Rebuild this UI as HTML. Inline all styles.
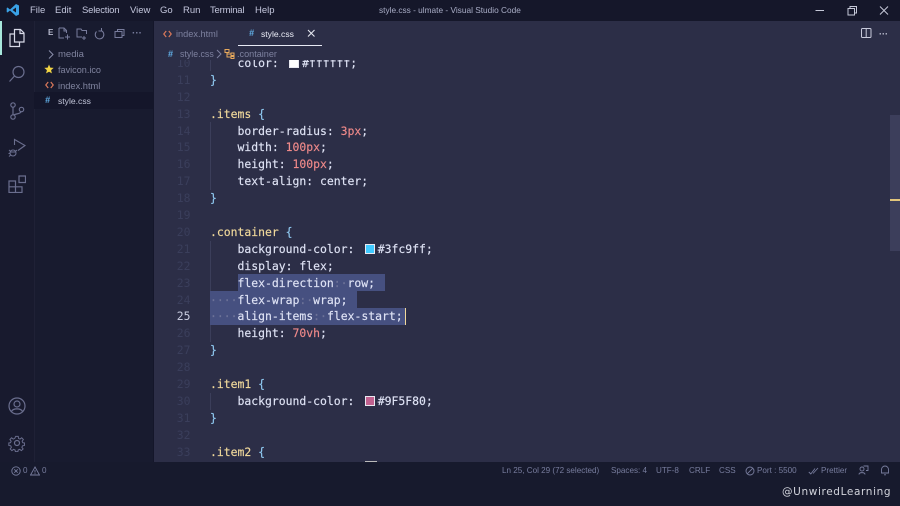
<!DOCTYPE html>
<html><head><meta charset="utf-8">
<style>
html,body{margin:0;padding:0;width:900px;height:506px;overflow:hidden;background:#171a2d}
*{box-sizing:border-box}
body{position:relative;font-family:"Liberation Sans",sans-serif;font-size:9.5px;color:#a9adc6}
.a{position:absolute;white-space:pre}
.m{top:4px;font-size:9.5px;color:#c3c6dc;line-height:14px}
#ed{position:absolute;left:153px;top:60px;width:737px;height:402px;overflow:hidden}
#in{position:absolute;left:0;top:2.4px;width:737px;height:400px}
.l{position:absolute;left:57px;font-family:"DejaVu Sans Mono","Liberation Mono",monospace;font-size:11.43px;line-height:17px;color:#dfe3f5;white-space:pre;-webkit-text-stroke:.15px}
.n{position:absolute;width:37.5px;text-align:right;font-family:"DejaVu Sans Mono",monospace;font-size:11.4px;line-height:17px;color:#3a3e5b;left:0}
.y{color:#f1d99b}.b{color:#8fc8f0}.r{color:#f08a8a}
.d{color:#6d7398}
.sw{display:inline-block;width:10px;height:10px;border:1px solid #e8e8f0;vertical-align:-1px;margin-right:3px;margin-left:3.5px}
.s{top:464px;font-size:8.1px;color:#787d9e;line-height:13px}
svg{position:absolute;fill:none}
</style></head><body>
<!-- panels -->
<div class="a" style="left:0;top:0;width:900px;height:21px;background:#15172a"></div>
<div class="a" style="left:0;top:21px;width:34px;height:441px;background:#181a2e"></div>
<div class="a" style="left:34px;top:21px;width:119px;height:441px;background:#181b2f;border-left:1px solid #1f2136"></div>
<div class="a" style="left:153px;top:21px;width:747px;height:441px;background:#2c2e47"></div>
<div class="a" style="left:153px;top:21px;width:1px;height:441px;background:#14162a"></div>
<div class="a" style="left:0;top:462px;width:900px;height:44px;background:#171a2d"></div>
<div class="a" style="left:0;top:21px;width:2px;height:34px;background:#a7e8dc"></div>
<div class="a" style="left:34px;top:92px;width:119px;height:17px;background:#14162a"></div>

<!-- title bar -->
<svg style="left:6px;top:3px" width="14" height="14" viewBox="0 0 14 14"><path d="M10 1 L13 2.500 V11.500 L10 13 L4 7.500 L1.500 9.500 L.7 9 V5 L1.500 4.500 L4 6.500 Z M10 4.500 L6.500 7 L10 9.500 Z" fill="#3aa2e6" fill-rule="evenodd"/></svg>
<span class="a m" style="left:30px">File</span>
<span class="a m" style="left:55px">Edit</span>
<span class="a m" style="left:82px;letter-spacing:-.2px">Selection</span>
<span class="a m" style="left:130px">View</span>
<span class="a m" style="left:160px">Go</span>
<span class="a m" style="left:183px">Run</span>
<span class="a m" style="left:210px;letter-spacing:-.2px">Terminal</span>
<span class="a m" style="left:255px">Help</span>
<span class="a" style="left:379px;top:3px;font-size:8.300px;line-height:14px;color:#a9adc6">style.css - ulmate - Visual Studio Code</span>
<svg style="left:810px;top:5px" width="80" height="12" viewBox="0 0 80 12" stroke="#c5c8d8" stroke-width="1"><path d="M5.500 5.500H14"/><path d="M38 3.500h6.500v6.500h-6.500z"/><path d="M40 3.500V1.500h6.500v6.500h-2"/><path d="M70 1.500l8 8M78 1.500l-8 8"/></svg>

<!-- activity bar icons -->
<svg style="left:8px;top:28px" width="18" height="20" viewBox="0 0 18 20" stroke="#d8dae8" stroke-width="1.200"><path d="M6.500 1.500h6l3.500 3.500v9h-9.500z"/><path d="M12 1.500v4h4"/><path d="M6.500 6H2v12.500h9.500V14"/></svg>
<svg style="left:8px;top:65px" width="18" height="18" viewBox="0 0 18 18" stroke="#6a6e8e" stroke-width="1.200"><circle cx="10.500" cy="7" r="5.500"/><path d="M6.500 11 1.500 16.500"/></svg>
<svg style="left:8px;top:102px" width="18" height="18" viewBox="0 0 18 18" stroke="#6a6e8e" stroke-width="1.200"><circle cx="5" cy="3" r="2.200"/><circle cx="5" cy="15" r="2.200"/><circle cx="13.500" cy="7.500" r="2.200"/><path d="M5 5.200v7.600M13 9.700C12.500 12 8 11.500 5.500 13"/></svg>
<svg style="left:7px;top:138px" width="20" height="20" viewBox="0 0 20 20" stroke="#6a6e8e" stroke-width="1.100"><path d="M7.500 7V1.500L18 7.500 11 12.500"/><circle cx="6" cy="15" r="3"/><path d="M2 12 3.800 13.500M1.500 15.500H3M2 18.500 3.800 17M10 12 8.200 13.500M3.500 14h5"/></svg>
<svg style="left:8px;top:175px" width="18" height="18" viewBox="0 0 18 18" stroke="#6a6e8e" stroke-width="1.200"><path d="M1 6h6.500v11.500H1zM1 11.800h13V17.500H7.500M7.500 11.800h6.500"/><path d="M11 1h6.500v6.500H11z"/></svg>
<svg style="left:8px;top:397px" width="18" height="18" viewBox="0 0 18 18" stroke="#6a6e8e" stroke-width="1.200"><circle cx="9" cy="9" r="8"/><circle cx="9" cy="7" r="3"/><path d="M3.500 14.500C5 11 13 11 14.500 14.500"/></svg>
<svg style="left:8px;top:434px" width="18" height="18" viewBox="0 0 18 18" stroke="#6a6e8e" stroke-width="1.200"><circle cx="9" cy="9" r="2.500"/><path d="M7.500 1h3l.4 2.500 1.800.8 2-1.500 2 2.100-1.500 2 .8 1.800 2 .3v3l-2.300.4-.8 1.800 1.500 2-2.100 2-2-1.500-1.800.8-.4 2h-3l-.4-2-1.800-.8-2 1.500-2.100-2 1.500-2-.8-1.800-2.300-.4v-3l2-.3.8-1.800-1.500-2 2-2.100 2 1.500 1.800-.8z" transform="translate(1.500 1.500) scale(.83)"/></svg>

<!-- explorer -->
<span class="a" style="left:48px;top:27px;font-size:8px;line-height:12px;color:#b8bbcf;font-weight:bold">E</span>
<svg style="left:58px;top:27px" width="92" height="13" viewBox="0 0 92 13" stroke="#787c9c" stroke-width="1"><path d="M1 1h5l2.500 2.500V6M1 1v10h5M6 1v3h3M7 10h5M9.500 7.500v5"/><path d="M19 3V2h4l1 1.500h4.500V7M19 3v7h5M26 9v4M24 11h4"/><path d="M43 3.500A4.300 4.300 0 1 1 38.500 4.500M43.500 1v3h-3"/><path d="M57 4.500h7v6h-7zM59.500 4.500V2.500h6.500v6h-2"/></svg>
<span class="a" style="left:132px;top:27px;font-size:10px;line-height:14px;color:#787c9c;font-weight:bold">···</span>
<svg style="left:47px;top:49px" width="8" height="11" viewBox="0 0 8 11" stroke="#8b8fac" stroke-width="1"><path d="M2 1.500 6 5.500 2 9.500"/></svg>
<span class="a" style="left:58px;top:48px;font-size:9.500px;line-height:14px;color:#80849f">media</span>
<svg style="left:44px;top:64px" width="10" height="10" viewBox="0 0 10 10"><path d="M5 .5 6.300 3.600 9.700 3.900 7.100 6.100 7.900 9.400 5 7.700 2.100 9.400 2.900 6.100.3 3.900 3.700 3.600Z" fill="#f2d544"/></svg>
<span class="a" style="left:58px;top:63px;font-size:9.100px;line-height:14px;color:#80849f">favicon.ico</span>
<svg style="left:45px;top:81px" width="9" height="8" viewBox="0 0 9 8" stroke="#d9785a" stroke-width="1.200"><path d="M3.200 1 .8 4 3.200 7M5.800 1 8.200 4 5.800 7"/></svg>
<span class="a" style="left:58px;top:79px;font-size:9.300px;line-height:14px;color:#80849f">index.html</span>
<span class="a" style="left:45px;top:93px;font-size:9px;line-height:14px;color:#62b0e8;font-weight:bold;font-style:italic">#</span>
<span class="a" style="left:58px;top:94px;font-size:8.600px;line-height:14px;color:#c2c5d8">style.css</span>

<!-- tabs -->
<svg style="left:163px;top:30px" width="9" height="8" viewBox="0 0 9 8" stroke="#d9785a" stroke-width="1.200"><path d="M3.200 1 .8 4 3.200 7M5.800 1 8.200 4 5.800 7"/></svg>
<span class="a" style="left:176px;top:27px;font-size:9.200px;line-height:14px;color:#7d819f">index.html</span>
<span class="a" style="left:249px;top:26px;font-size:9px;line-height:14px;color:#62b0e8;font-weight:bold;font-style:italic">#</span>
<span class="a" style="left:261px;top:27px;font-size:8.600px;line-height:14px;color:#eceef8">style.css</span>
<svg style="left:307px;top:29px" width="9" height="9" viewBox="0 0 9 9" stroke="#e5e7f0" stroke-width="1.100"><path d="M1 1l6.500 6.500M7.500 1 1 7.500"/></svg>
<div class="a" style="left:238px;top:45px;width:84px;height:1px;background:#e8eaf5"></div>
<svg style="left:861px;top:28px" width="11" height="11" viewBox="0 0 11 11" stroke="#c8cadb" stroke-width="1"><rect x=".5" y=".5" width="9.500" height="9" rx="1"/><path d="M5.200 .5v9"/></svg>
<span class="a" style="left:879px;top:27px;font-size:9px;line-height:14px;color:#c8cadb;font-weight:bold">···</span>

<!-- breadcrumb -->
<span class="a" style="left:168px;top:47px;font-size:9px;line-height:14px;color:#62b0e8;font-weight:bold">#</span>
<span class="a" style="left:180px;top:47px;font-size:8.800px;line-height:14px;color:#7d819f">style.css</span>
<svg style="left:216px;top:49px" width="6" height="10" viewBox="0 0 6 10" stroke="#7d819f" stroke-width="1"><path d="M1 1l4 4-4 4"/></svg>
<svg style="left:224px;top:48px" width="11" height="11" viewBox="0 0 11 11" stroke="#e6a85c" stroke-width="1"><path d="M1 1.500h4v3H1zM7 5h3v2.500H7zM7 8.500h3V10.500H7zM3 4.500V9H7M3 6h4"/></svg>
<span class="a" style="left:237px;top:47px;font-size:9.100px;line-height:14px;color:#7d819f">.container</span>

<!-- editor -->
<div id="ed"><div id="in">
<div class="n" style="top:-7.500px">10</div>
<div class="n" style="top:9.500px">11</div>
<div class="n" style="top:26.400px">12</div>
<div class="n" style="top:43.300px">13</div>
<div class="n" style="top:60.200px">14</div>
<div class="n" style="top:77.100px">15</div>
<div class="n" style="top:94px">16</div>
<div class="n" style="top:110.900px">17</div>
<div class="n" style="top:127.800px">18</div>
<div class="n" style="top:144.700px">19</div>
<div class="n" style="top:161.600px">20</div>
<div class="n" style="top:178.500px">21</div>
<div class="n" style="top:195.400px">22</div>
<div class="n" style="top:212.300px">23</div>
<div class="n" style="top:229.200px">24</div>
<div class="n" style="top:246.100px;color:#c9cce0">25</div>
<div class="n" style="top:263px">26</div>
<div class="n" style="top:279.900px">27</div>
<div class="n" style="top:296.800px">28</div>
<div class="n" style="top:313.700px">29</div>
<div class="n" style="top:330.600px">30</div>
<div class="n" style="top:347.500px">31</div>
<div class="n" style="top:364.400px">32</div>
<div class="n" style="top:381.300px">33</div>

<!-- indent guides -->
<div class="a" style="left:57px;top:-2px;width:1px;height:11px;background:#3b3e5a"></div>
<div class="a" style="left:57px;top:60px;width:1px;height:68px;background:#3b3e5a"></div>
<div class="a" style="left:57px;top:179px;width:1px;height:101px;background:#3b3e5a"></div>
<div class="a" style="left:57px;top:331px;width:1px;height:17px;background:#3b3e5a"></div>

<!-- selection -->
<div class="a" style="left:84.500px;top:212.100px;width:147px;height:17px;background:#465080"></div>
<div class="a" style="left:57px;top:229.100px;width:147px;height:17px;background:#465080"></div>
<div class="a" style="left:57px;top:246.100px;width:195px;height:17px;background:#465080"></div>

<div class="l" style="top:-7.500px">    color: <span class="sw" style="background:#fff"></span>#ffffff;</div>
<div class="l b" style="top:9.500px">}</div>
<div class="l" style="top:43.300px"><span class="y">.items</span> <span class="b">{</span></div>
<div class="l" style="top:60.200px">    border-radius: <span class="r">3px</span>;</div>
<div class="l" style="top:77.100px">    width: <span class="r">100px</span>;</div>
<div class="l" style="top:94px">    height: <span class="r">100px</span>;</div>
<div class="l" style="top:110.900px">    text-align: center;</div>
<div class="l b" style="top:127.800px">}</div>
<div class="l" style="top:161.600px"><span class="y">.container</span> <span class="b">{</span></div>
<div class="l" style="top:178.500px">    background-color: <span class="sw" style="background:#3fc9ff"></span>#3fc9ff;</div>
<div class="l" style="top:195.400px">    display: flex;</div>
<div class="l" style="top:212.300px">    flex-direction<span class="d">:·</span>row;</div>
<div class="l" style="top:229.200px"><span class="d">····</span>flex-wrap<span class="d">:·</span>wrap;</div>
<div class="l" style="top:246.100px"><span class="d">····</span>align-items<span class="d">:·</span>flex-start;</div>
<div class="l" style="top:263px">    height: <span class="r">70vh</span>;</div>
<div class="l b" style="top:279.900px">}</div>
<div class="l" style="top:313.700px"><span class="y">.item1</span> <span class="b">{</span></div>
<div class="l" style="top:330.600px">    background-color: <span class="sw" style="background:#c0618f"></span>#9F5F80;</div>
<div class="l b" style="top:347.500px">}</div>
<div class="l" style="top:381.300px"><span class="y">.item2</span> <span class="b">{</span></div>
<div class="a" style="left:251.500px;top:246.100px;width:1.300px;height:17px;background:#f1d99b"></div>
<div class="a" style="left:212px;top:399px;width:12px;height:2px;background:#bbb"></div>
</div></div>

<!-- scrollbar -->
<div class="a" style="left:890px;top:115px;width:10px;height:136px;background:#3c3e5b"></div>
<div class="a" style="left:890px;top:199px;width:10px;height:1.500px;background:#e3c67c"></div>

<!-- status bar -->
<svg style="left:11px;top:466px" width="10" height="10" viewBox="0 0 10 10" stroke="#787d9e" stroke-width=".9"><circle cx="5" cy="5" r="4.200"/><path d="M3.300 3.300l3.400 3.400M6.700 3.300 3.300 6.700"/></svg>
<span class="a s" style="left:23px">0</span>
<svg style="left:30px;top:466px" width="10" height="10" viewBox="0 0 10 10" stroke="#787d9e" stroke-width=".9"><path d="M5 1 9.500 9H.5ZM5 4v2.500M5 7.300v.8"/></svg>
<span class="a s" style="left:42px">0</span>
<span class="a s" style="left:502px">Ln 25, Col 29 (72 selected)</span>
<span class="a s" style="left:611px">Spaces: 4</span>
<span class="a s" style="left:656px">UTF-8</span>
<span class="a s" style="left:689px">CRLF</span>
<span class="a s" style="left:719px">CSS</span>
<svg style="left:745px;top:466px" width="10" height="10" viewBox="0 0 10 10" stroke="#787d9e" stroke-width=".9"><circle cx="5" cy="5" r="4"/><path d="M2.200 7.800 7.800 2.200"/></svg>
<span class="a s" style="left:757px">Port : 5500</span>
<svg style="left:808px;top:466px" width="11" height="10" viewBox="0 0 11 10" stroke="#787d9e" stroke-width=".9"><path d="M.8 6 2.800 8 7 2.500M5 7.500 10 2"/></svg>
<span class="a s" style="left:821px">Prettier</span>
<svg style="left:858px;top:465px" width="11" height="11" viewBox="0 0 11 11" stroke="#787d9e" stroke-width=".9"><circle cx="4" cy="4" r="2"/><path d="M1 9.500C1 7 7 7 7 9.500M5.500 1H10v4.500H8"/></svg>
<svg style="left:880px;top:465px" width="10" height="11" viewBox="0 0 10 11" stroke="#787d9e" stroke-width=".9"><path d="M1.500 8V4.500a3.500 3.500 0 0 1 7 0V8ZM4 9.800h2"/></svg>
<span class="a" style="left:782px;top:485px;font-family:'DejaVu Sans',sans-serif;font-size:10.500px;line-height:14px;letter-spacing:.63px;color:#d2d4dc">@UnwiredLearning</span>
</body></html>
